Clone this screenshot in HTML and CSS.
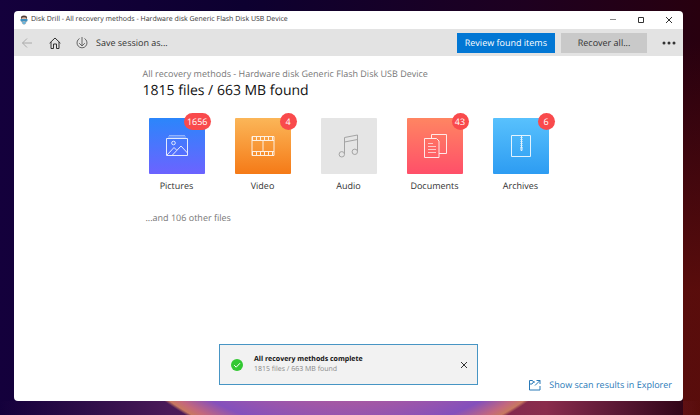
FILE: index.html
```html
<!DOCTYPE html>
<html lang="en">
<head>
<meta charset="utf-8">
<title>Disk Drill</title>
<link rel="stylesheet" href="styles.css">
</head>
<body>
<div class="window">
  <header class="titlebar">
    <svg class="app-icon" viewBox="0 0 16 20" aria-hidden="true">
      <path d="M2 9V5q0-4 6-4t6 4v4z" fill="#4d3c36"/>
      <path d="M3 6q5-3 10 0v6q0 7-5 7t-5-7z" fill="#e0bda6"/>
      <path d="M1 8h14v4q-3 3-7 0-4 3-7 0z" fill="#3c8fc0"/>
      <path d="M4 14q4-2 8 0-1 5-4 5t-4-5z" fill="#69b4dc"/>
    </svg>
    <h1 class="title">Disk Drill - All recovery methods - Hardware disk Generic Flash Disk USB Device</h1>
    <div class="caption">
      <button type="button" aria-label="Minimize"><svg viewBox="0 0 8 8"><path d="M1 3.500h6" stroke="#888"/></svg></button>
      <button type="button" aria-label="Maximize"><svg viewBox="0 0 8 8"><path d="M1.500 1.500h5v5h-5z"/></svg></button>
      <button type="button" aria-label="Close"><svg viewBox="0 0 8 8"><path d="M1 1l6 6M7 1L1 7"/></svg></button>
    </div>
  </header>

  <nav class="toolbar" aria-label="Session">
    <button class="tool back" type="button" aria-label="Back" disabled><svg viewBox="0 0 12 12"><path d="M11 6H1.500M6 1.500L1.500 6 6 10.500"/></svg></button>
    <button class="tool home" type="button" aria-label="Home"><svg viewBox="0 0 12 12"><path d="M.6 6.200L6 1l5.400 5.200M2 5v6.500h2.500V7h3v4.500H10V5"/></svg></button>
    <button class="tool save" type="button"><svg viewBox="0 0 12 12"><path d="M3.500 1.500a5 5 0 1 0 5 0M6 0v9M3.200 6.200L6 9l2.800-2.800" stroke="#666"/></svg>Save session as...</button>
    <div class="actions">
      <button class="action primary" type="button">Review found items</button>
      <button class="action" type="button">Recover all...</button>
      <button class="tool more" type="button" aria-label="More"><svg viewBox="0 0 14 4"><circle cx="2" cy="2" r="1.500"/><circle cx="7" cy="2" r="1.500"/><circle cx="12" cy="2" r="1.500"/></svg></button>
    </div>
  </nav>

  <main class="results">
    <p class="source">All recovery methods - Hardware disk Generic Flash Disk USB Device</p>
    <h2 class="summary">1815 files / 663 MB found</h2>
    <ul class="tiles">
      <li><button class="tile" type="button"><span class="art pictures"><svg viewBox="0 0 24 24"><path d="M4 1.500h16M3 3h18" opacity=".5"/><path d="M1.500 4.500h21v17h-21zM2 21l7-7.500 2.500 2.500M7 21.500l9-9.500 6.500 7"/><circle cx="8.500" cy="9" r="1.800"/></svg><span class="badge">1656</span></span>Pictures</button></li>
      <li><button class="tile" type="button"><span class="art video"><svg viewBox="0 0 24 24"><path d="M1 2.500h22v19H1zM1 6.500h22M1 17.500h22M12 6.500v11"/><path class="holes" d="M1 4.500h22M1 19.500h22"/></svg><span class="badge">4</span></span>Video</button></li>
      <li><button class="tile" type="button"><span class="art audio"><svg viewBox="0 0 24 24"><path d="M7.500 20V3.500L20.500 1v16.500M7.500 8l13-2.500"/><circle cx="4.800" cy="20.300" r="2.700"/><circle cx="17.800" cy="17.800" r="2.700"/></svg></span>Audio</button></li>
      <li><button class="tile" type="button"><span class="art documents"><svg viewBox="0 0 24 24"><path d="M1.500 4.500h12l2.500 2.500v16.500H1.500zM8.500 4.500V.500h15v19H16"/><path d="M5 9.500h5M5 12.500h8M5 15.500h8M5 18.500h8" opacity=".75"/></svg><span class="badge">43</span></span>Documents</button></li>
      <li><button class="tile" type="button"><span class="art archives"><svg viewBox="0 0 24 24"><path d="M2.500 1.500h19v21h-19zM12.500 2v11"/><path class="zip" d="M12.500 3v11"/><path d="M12 13.500h1v3h-1z"/></svg><span class="badge">6</span></span>Archives</button></li>
    </ul>
    <p class="others">...and 106 other files</p>
  </main>

  <footer class="footer">
    <section class="toast" role="status">
      <svg class="check" viewBox="0 0 12 12" aria-hidden="true"><circle cx="6" cy="6" r="6"/><path d="M3.200 6.200l2 2 3.800-4"/></svg>
      <div class="message">
        <strong>All recovery methods complete</strong>
        <span>1815 files / 663 MB found</span>
      </div>
      <button class="dismiss" type="button" aria-label="Dismiss"><svg viewBox="0 0 8 8"><path d="M1 1l6 6M7 1L1 7"/></svg></button>
    </section>
    <a class="explorer" href="#"><svg viewBox="0 0 12 12" aria-hidden="true"><path d="M.5 5V1.500h3l1 1.500L3 5H.5v6h10.500V7M6 3h-2M6 6.500L11 1.500M7.500 1.500H11V5"/></svg>Show scan results in Explorer</a>
  </footer>
</div>
</body>
</html>
```
FILE: styles.css
```css
* {
  box-sizing: border-box;
}

body {
  margin: 0;
  min-height: 100vh;
  display: flex;
  padding: 11px 17px 14px 14px;
  font: 9px/12px "Open Sans", "Noto Sans", sans-serif;
  text-rendering: geometricPrecision;
  color: #333;
  background:
    radial-gradient(circle 316px at 49.5% -242px, #a458a4 82%, #8450bc 92%, #c4687c 97%, #c87860 99%, transparent 100%) bottom / 100% 30px no-repeat,
    linear-gradient(90deg, transparent, #4a1a58 24%, #8a2c4c 78%, transparent) bottom / 100% 14px no-repeat,
    linear-gradient(transparent 10%, rgba(110, 18, 10, 0.7) 70%) right / 17px 100% no-repeat,
    linear-gradient(90deg, #14003c, #0d0030 35%, #1e0020 75%, #28000f);
}

h1, h2, p, ul {
  margin: 0;
  padding: 0;
  font-weight: 400;
}

button {
  margin: 0;
  padding: 0;
  border: 0;
  background: none;
  font: inherit;
  text-rendering: inherit;
  color: inherit;
}

svg {
  display: block;
  flex: none;
  fill: none;
  stroke: currentColor;
}

.window {
  flex: 1;
  display: flex;
  flex-direction: column;
  overflow: hidden;
  border-radius: 4px;
  background: #fff;
}

.titlebar {
  display: flex;
  align-items: center;
  height: 18px;
  padding: 0 10px 0 6px;
}

.app-icon {
  width: 8px;
  height: 10px;
  margin-right: 3px;
  stroke: none;
}

.title {
  font-size: 7px;
}

.caption {
  display: flex;
  gap: 20px;
  margin-left: auto;
}

.caption svg,
.dismiss svg {
  width: 8px;
  height: 8px;
}

.toolbar {
  display: flex;
  align-items: center;
  height: 27px;
  padding: 0 7px;
  background: #e3e3e3;
}

.tool {
  display: flex;
  align-items: center;
  gap: 8px;
}

.tool svg {
  width: 12px;
  height: 12px;
}

.back {
  color: #aaa;
}

.home {
  margin-left: 16px;
}

.save {
  margin-left: 15px;
}

.actions {
  display: flex;
  gap: 6px;
  margin-left: auto;
}

.action {
  min-width: 86px;
  height: 20px;
  padding: 0 8px;
  background: #c9c9c9;
}

.primary {
  min-width: 98px;
  background: #0277d4;
  color: #fff;
}

.more {
  margin-left: 9px;
}

.tool.more svg {
  width: 14px;
  height: 4px;
  fill: #333;
  stroke: none;
}

.results {
  flex: 1;
  width: 100%;
  max-width: 412px;
  margin: 0 auto;
  padding-top: 12px;
}

.source {
  color: #777;
}

.summary {
  margin-top: 1px;
  font-size: 14px;
  line-height: 20px;
  color: #111;
}

.tiles {
  display: flex;
  justify-content: space-between;
  padding: 0 6px;
  margin-top: 17px;
  list-style: none;
}

.tile {
  display: flex;
  flex-direction: column;
  align-items: center;
  gap: 6px;
  width: 56px;
}

.art {
  position: relative;
  display: grid;
  place-items: center;
  width: 56px;
  height: 56px;
  border-radius: 1px;
  color: #fff;
}

.art svg {
  width: 24px;
  height: 24px;
  opacity: 0.85;
}

.pictures {
  background: linear-gradient(#2b86fb, #6c63ff);
}

.video {
  background: linear-gradient(#fbb658, #f57a17);
}

.audio {
  background: #e5e5e5;
  color: #999;
}

.documents {
  background: linear-gradient(#ff8562, #ff4f69);
}

.archives {
  background: linear-gradient(#58c1fd, #2d9cf2);
}

.holes {
  stroke-width: 3;
  stroke-dasharray: 1 3;
}

.zip {
  stroke-width: 2;
  stroke-dasharray: 1 1;
}

.badge {
  position: absolute;
  top: -5px;
  right: -6px;
  min-width: 17px;
  padding: 0 3px;
  border-radius: 9px;
  background: #f94a4c;
  line-height: 17px;
  text-align: center;
}

.others {
  margin: 20px 0 0 3px;
  color: #777;
}

.footer {
  display: grid;
  grid-template-columns: 1fr minmax(0, 259px) 1fr;
  padding: 0 11px 10px;
}

.toast {
  grid-column: 2;
  display: flex;
  align-items: center;
  height: 41px;
  margin-bottom: 6px;
  padding: 0 9px 0 11px;
  border: 1px solid #4795c4;
  background: #f2f2f2;
}

.check {
  width: 12px;
  height: 12px;
  margin-right: 11px;
  fill: #32c832;
  stroke: none;
}

.check path {
  fill: none;
  stroke: #fff;
}

.message {
  flex: 1;
  display: flex;
  flex-direction: column;
  font-size: 7px;
  line-height: 10px;
  color: #888;
}

.message strong {
  color: #111;
}

.explorer {
  display: flex;
  align-items: center;
  justify-self: end;
  align-self: end;
  gap: 8px;
  white-space: nowrap;
  color: #2a7ab8;
  text-decoration: none;
}

.explorer svg {
  width: 12px;
  height: 12px;
}
```
